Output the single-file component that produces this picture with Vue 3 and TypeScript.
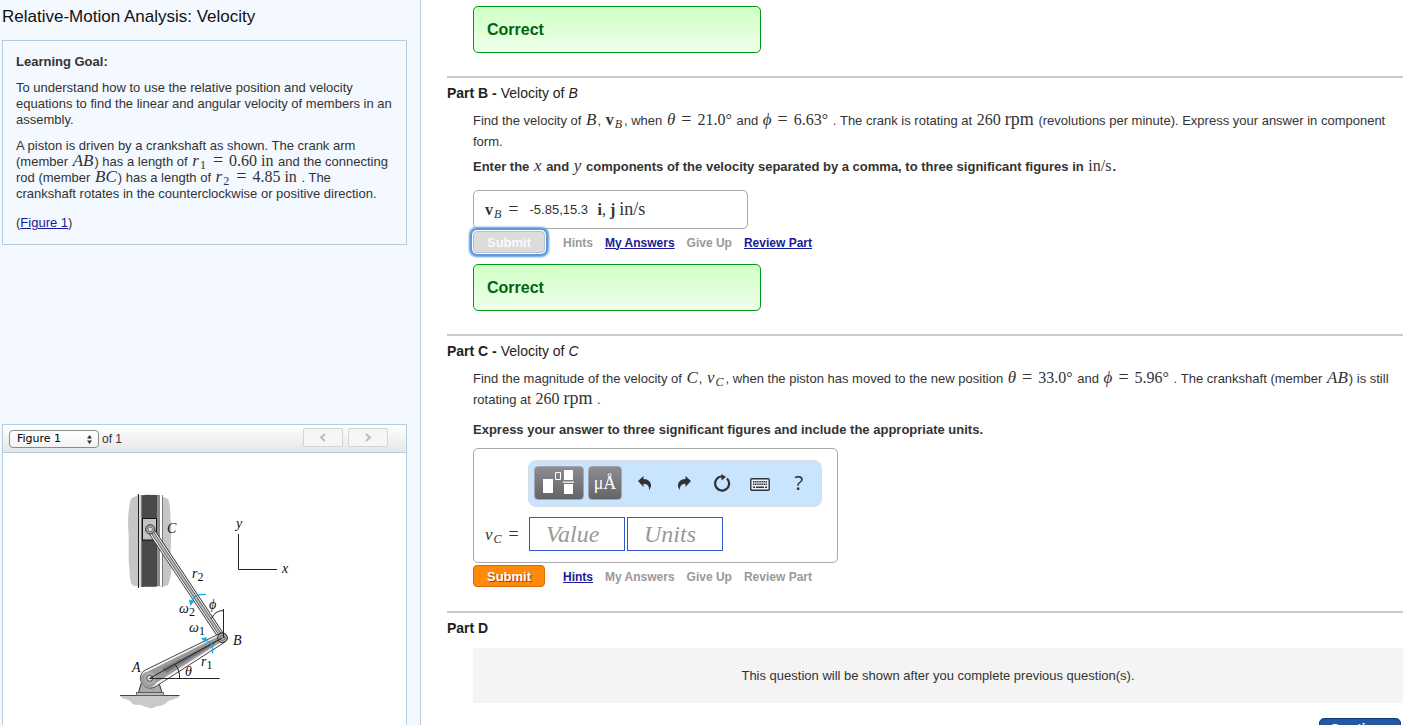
<script setup lang="ts">
import { ref } from 'vue'

const figure = ref('1')
const velocityB = ref('-5.85,15.3')
const value = ref('')
const units = ref('')
</script>

<template>
  <div class="page">
    <aside class="side">
      <h1>Relative-Motion Analysis: Velocity</h1>
      <section class="goal">
        <h2>Learning Goal:</h2>
        <p>To understand how to use the relative position and velocity equations to find the linear and angular velocity of members in an assembly.</p>
        <p>
          A piston is driven by a crankshaft as shown. The crank arm (member <span class="m"><i>AB</i></span>) has a length of
          <span class="m"><i>r</i><sub>1</sub><span class="eq">=</span>0.60 in</span> and the connecting rod (member
          <span class="m"><i>BC</i></span>) has a length of
          <span class="m"><i>r</i><sub>2</sub><span class="eq">=</span>4.85 in</span> . The crankshaft rotates in the counterclockwise or positive direction.
        </p>
        <p class="figlink">(<a href="#figure">Figure 1</a>)</p>
      </section>

      <section id="figure" class="figure">
        <header class="figbar">
          <label class="pick">
            <span class="selectwrap">
              <select v-model="figure" aria-label="Figure"><option value="1">Figure 1</option></select>
              <svg class="updown" width="5" height="9" viewBox="0 0 5 9"><path d="M0 3.6 2.5 0 5 3.6zM0 5.4h5L2.5 9z" fill="#333" /></svg>
            </span>
            <span>of 1</span>
          </label>
          <div class="nav">
            <button type="button" aria-label="Previous figure"><svg width="8" height="9" viewBox="0 0 8 9"><path d="M6 1 2 4.500 6 8" /></svg></button>
            <button type="button" aria-label="Next figure"><svg width="8" height="9" viewBox="0 0 8 9"><path d="M2 1 6 4.500 2 8" /></svg></button>
          </div>
        </header>
        <div class="canvas">
          <svg class="diagram" width="200" height="240" viewBox="0 0 200 240" role="img" aria-label="Piston driven by crankshaft">
            <!-- cylinder guide -->
            <path d="M28 15.500C25 16.500 22 17 20.500 20C18 32 17.500 40 18.500 52C19 65 18 78 19.500 90C20 98 20 103 23 105.500C28 107.500 34 106 39 107C46 106 53 107.500 58 105C61 98 62 90 61 80C60 68 62 56 61 44C60 36 61 28 58.500 20C56 16.500 50 17 46 15C40 14 34 16.500 28 15.500z" fill="#c6c6c6" />
            <rect x="28" y="15" width="4" height="92" fill="#d8d8d8" />
            <path d="M28.500 14v94M32 15v92" stroke="#222" stroke-width="1" />
            <path d="M32 15.500C37 14 42 15.500 47 15V106.500C42 107.500 37 106 32 107z" fill="#4a4a4a" />
            <rect x="47" y="15" width="3" height="91" fill="#8c8c8c" />
            <rect x="50" y="15" width="2" height="91" fill="#fff" />
            <path d="M52.500 15v92" stroke="#666" stroke-width=".8" />
            <rect x="32.500" y="38.500" width="14" height="21.500" fill="#c4c4c4" stroke="#111" />
            <!-- support -->
            <path d="M10 216H69.500C66 220 61 219 57 222C53 227 48 225 43 228C37 229 32 224 27 225C21 225 22 221 18 220C14 219 12 218 10 216z" fill="#c9c9c9" />
            <path d="M10 215.500H69.500" stroke="#444" />
            <path d="M33 197 28.500 212.500H52L47 197z" fill="#aaa" stroke="#333" />
            <rect x="26.500" y="212.500" width="27" height="3" fill="#bbb" stroke="#555" stroke-width=".8" />
            <!-- connecting rod -->
            <path d="M40.200 49.300 112.500 158" stroke="#333" stroke-width="7.400" stroke-linecap="round" />
            <path d="M40.200 49.300 112.500 158" stroke="#eee" stroke-width="5.800" stroke-linecap="round" />
            <path d="M40.200 49.300 112.500 158" stroke="#555" stroke-width="3.400" />
            <path d="M40.200 49.300 112.500 158" stroke="#bbb" stroke-width="1.900" />
            <circle cx="40.200" cy="49.300" r="4.600" fill="#aaa" stroke="#333" />
            <circle cx="40.200" cy="49.300" r="2.300" fill="#ddd" stroke="#555" stroke-width=".8" />
            <!-- crank -->
            <path d="M35.400 190 110.500 153.200A5 5 0 0 1 115 162L46.500 206A10 10 0 0 1 31 201.500A9 9 0 0 1 35.400 190z" fill="#f4f4f4" stroke="#333" stroke-width=".9" />
            <path d="M37.500 191.700 110 155.500 114 160 46 203A8 8 0 1 1 37.500 191.700z" fill="#9a9a9a" />
            <path d="M52 188.500 107 160 104 164.500 56 193z" fill="#767676" />
            <circle cx="40" cy="198.300" r="6.500" fill="#aaa" />
            <circle cx="39.700" cy="198.300" r="3" fill="#ddd" stroke="#444" stroke-width=".9" />
            <circle cx="112.500" cy="157.800" r="4.800" fill="#aaa" stroke="#222" />
            <circle cx="112.500" cy="157.800" r="2.500" fill="#bbb" stroke="#444" stroke-width=".7" />
            <!-- reference lines and angles -->
            <g fill="none" stroke="#222" stroke-width="1">
              <path d="M39.700 198.300 112.500 157.800M39.700 198.500H109.500M113.500 129V158" />
              <path d="M101.500 138.500Q105 130.500 113.500 130.500M65 184.500Q70 190 69.500 198.500" />
              <path d="M128.500 54V89.500H167" />
            </g>
            <g fill="none" stroke="#14a9e0" stroke-width="1.200">
              <path d="M96 114.500Q84 113 81.500 121.500M102.500 173.500Q104 162 95 160" />
            </g>
            <path d="M79 119.500 84.200 121.500 80.200 126zM91 158 97 157.500 95.500 162.500z" fill="#14a9e0" />
            <g class="lettering">
              <text x="57" y="53">C</text><text x="126" y="48">y</text><text x="172" y="93">x</text>
              <text x="82" y="98">r<tspan class="n" dy="3">2</tspan></text>
              <text x="69" y="133">ω<tspan class="n" dy="3">2</tspan></text>
              <text x="99" y="129">ϕ</text>
              <text x="79" y="152">ω<tspan class="n" dy="3">1</tspan></text>
              <text x="123" y="165">B</text><text x="22" y="192">A</text>
              <text x="91" y="186">r<tspan class="n" dy="3">1</tspan></text>
              <text x="75" y="196">θ</text>
            </g>
          </svg>
        </div>
      </section>
    </aside>

    <main class="main">
      <div class="body first"><div class="correct">Correct</div></div>

      <section class="part">
        <h2>Part B - <span>Velocity of <i>B</i></span></h2>
        <div class="body">
          <p class="text">
            Find the velocity of <span class="m"><i>B</i></span>, <span class="m"><b>v</b><sub><i>B</i></sub></span>, when
            <span class="m"><i>θ</i><span class="eq">=</span>21.0°</span> and
            <span class="m"><i>ϕ</i><span class="eq">=</span>6.63°</span> . The crank is rotating at
            <span class="m">260 <span class="unit">rpm</span></span> (revolutions per minute). Express your answer in component form.
          </p>
          <p class="ask">
            Enter the <span class="m"><i>x</i></span> and <span class="m"><i>y</i></span> components of the velocity separated by a comma, to three significant figures in <span class="m">in/s</span>.
          </p>
          <div class="answer short">
            <label for="vb" class="m"><b>v</b><sub><i>B</i></sub><span class="eq">=</span></label>
            <input id="vb" v-model="velocityB" class="plain" type="text" readonly />
            <span class="m"><b>i</b>, <b>j</b> <span class="unit">in/s</span></span>
          </div>
          <div class="actions">
            <button type="button" class="submit spent">Submit</button>
            <span class="off">Hints</span><a href="#answers">My Answers</a><span class="off">Give Up</span><a href="#review">Review Part</a>
          </div>
          <div class="correct">Correct</div>
        </div>
      </section>

      <section class="part">
        <h2>Part C - <span>Velocity of <i>C</i></span></h2>
        <div class="body">
          <p class="text">
            Find the magnitude of the velocity of <span class="m"><i>C</i></span>, <span class="m"><i>v</i><sub><i>C</i></sub></span>, when the piston has moved to the new position
            <span class="m"><i>θ</i><span class="eq">=</span>33.0°</span> and
            <span class="m"><i>ϕ</i><span class="eq">=</span>5.96°</span> . The crankshaft (member
            <span class="m"><i>AB</i></span>) is still rotating at <span class="m">260 <span class="unit">rpm</span></span> .
          </p>
          <p class="ask late">Express your answer to three significant figures and include the appropriate units.</p>
          <div class="answer long">
            <div class="toolbar">
              <button type="button" class="tool wide" aria-label="Templates">
                <svg width="32" height="26" viewBox="0 0 32 26"><path d="M1 10h10v14H1zM22 1h9v10h-9zM22 15h9v10h-9zM21 12.500h11v1.200H21z" fill="#fff" /><path d="M13.500 3.500h5v7h-5z" fill="none" stroke="#fff" /></svg>
              </button>
              <button type="button" class="tool" aria-label="Symbols">μÅ</button>
              <button type="button" class="icon" aria-label="Undo"><svg width="16" height="16" viewBox="0 0 16 16"><path d="M1 6 6.500 1V4C11.500 4.200 14.500 7 14 11.500L12 15.500C12.500 11.500 11 9 6.500 8.800V12z" fill="#333" /></svg></button>
              <button type="button" class="icon" aria-label="Redo"><svg width="16" height="16" viewBox="0 0 16 16"><path d="M15 6 9.500 1V4C4.500 4.200 1.500 7 2 11.500L4 15.500C3.500 11.500 5 9 9.500 8.800V12z" fill="#333" /></svg></button>
              <button type="button" class="icon" aria-label="Reset"><svg width="18" height="18" viewBox="0 0 18 18"><path d="M14 4.500A7 7 0 1 1 9 2.500" fill="none" stroke="#333" stroke-width="2.200" /><path d="M8.500 0 13 3 8.500 6.500z" fill="#333" /></svg></button>
              <button type="button" class="icon low" aria-label="Keyboard"><svg width="20" height="13" viewBox="0 0 20 13"><rect x=".8" y=".8" width="18.400" height="11.400" rx="1" fill="#eaf4ff" stroke="#333" stroke-width="1.400" /><path d="M3 3.700h14M3 6.200h14" stroke="#333" stroke-width="1.500" stroke-dasharray="1.500 .6" /><path d="M3 9.200h2M6 9.200h8M15 9.200h2" stroke="#333" stroke-width="1.500" /></svg></button>
              <button type="button" class="icon help" aria-label="Help">?</button>
            </div>
            <div class="entry">
              <label for="vc" class="m"><i>v</i><sub><i>C</i></sub><span class="eq">=</span></label>
              <input id="vc" v-model="value" type="text" placeholder="Value" />
              <input v-model="units" type="text" placeholder="Units" aria-label="Units" />
            </div>
          </div>
          <div class="actions">
            <button type="button" class="submit">Submit</button>
            <a href="#hints">Hints</a><span class="off">My Answers</span><span class="off">Give Up</span><span class="off">Review Part</span>
          </div>
        </div>
      </section>

      <section class="part">
        <h2>Part D</h2>
        <div class="body"><p class="locked">This question will be shown after you complete previous question(s).</p></div>
      </section>
      <div class="foot"><button type="button" class="continue">Continue</button></div>
    </main>
  </div>
</template>

<style>
body { margin: 0; background: #fff; }
</style>

<style scoped>
* { box-sizing: border-box; }
.page {
  display: flex;
  height: 100vh;
  overflow: hidden;
  font: 13px/16px "Liberation Sans", Arial, sans-serif;
  color: #333;
}
h1, h2, p { margin: 0; }
button, input, select { margin: 0; font: inherit; }
a { color: #1a1a99; }

.m { margin: 0 1px; font-family: "Liberation Serif", "Times New Roman", serif; font-size: 16px; line-height: 0; white-space: nowrap; }
.m i { font-size: 17px; }
.m sub, .m sub i { font-size: 12px; line-height: 0; }
.m sub { margin: 0 1px; vertical-align: -3px; }
.eq { margin: 0 6px; font-size: 18px; }
.unit { font-size: 18px; }

.side {
  flex: 0 0 421px;
  display: flex;
  flex-direction: column;
  padding: 7px 13px 0 2px;
  background: #f4f8ff;
  border-right: 1px solid #b4cce0;
}
h1 { font-size: 17px; line-height: 20px; font-weight: normal; color: #111; }
.goal { margin-top: 13px; padding: 13px; border: 1px solid #b4cce0; }
.goal h2 { font-size: 13px; line-height: 16px; }
.goal p { margin-top: 10px; }
.goal .figlink { margin-top: 13px; }

.figure {
  flex: 1 0 auto;
  display: flex;
  flex-direction: column;
  margin-top: 179px;
  border: 1px solid #b4cce0;
  border-bottom: 0;
  background: #fff;
}
.figbar {
  display: flex;
  justify-content: space-between;
  align-items: center;
  height: 28px;
  padding: 0 18px 0 6px;
  background: linear-gradient(#fff, #e6e6e6);
  border-bottom: 1px solid #b4cce0;
}
.pick { display: flex; align-items: center; gap: 3px; font-size: 12px; }
.selectwrap { position: relative; display: flex; }
.updown { position: absolute; right: 7px; top: 5px; pointer-events: none; }
select {
  appearance: none;
  width: 90px;
  height: 18px;
  padding: 0 0 0 7px;
  font: 11px/16px "DejaVu Sans", sans-serif;
  color: #000;
  background: linear-gradient(#fff, #f3f3f3);
  border: 1px solid #8c8c8c;
  border-radius: 4px;
}
.nav { display: flex; gap: 5px; padding-bottom: 2px; }
.nav button {
  display: grid;
  place-items: center;
  width: 40px;
  height: 19px;
  padding: 0;
  background: #f6f6f6;
  border: 1px solid #d4d4d4;
  border-radius: 2px;
}
.nav path { fill: none; stroke: #bcbcbc; stroke-width: 2; }
.canvas { padding: 27px 0 0 107px; }
.diagram { display: block; }
.lettering { font: italic 14px "Liberation Serif", serif; fill: #111; }
.n { font-style: normal; font-size: 12px; }

.main { flex: 1; min-width: 0; padding: 6px 20px 0 26px; }
.body { padding-left: 26px; }
.correct {
  width: 288px;
  padding: 13px;
  font-size: 16px;
  line-height: 19px;
  font-weight: bold;
  color: #006411;
  background: linear-gradient(#cfffc4, #efffec);
  border: 1px solid #009c12;
  border-radius: 5px;
}
.part { margin-top: 23px; padding-top: 7px; border-top: 2px solid #ccc; }
.part h2 { font-size: 14px; line-height: 16px; color: #222; }
.part h2 span { font-weight: normal; }
.text { margin-top: 9px; line-height: 21px; }
.ask { margin-top: 6px; font-weight: bold; line-height: 18px; }
.ask .m { font-weight: normal; }
.late { margin-top: 11px; }
.answer { border: 1px solid #aaa; border-radius: 5px; }
.short {
  display: flex;
  align-items: center;
  width: 275px;
  height: 39px;
  margin-top: 14px;
  padding-left: 10px;
}
.short .m, .entry .m { line-height: 20px; }
.plain { width: 67px; height: 20px; margin-left: 4px; padding: 0; border: 0; color: #333; background: none; outline: 0; }
.actions {
  display: flex;
  align-items: center;
  gap: 12px;
  margin: 2px 0 10px;
  padding-bottom: 1px;
  font-size: 12px;
  font-weight: bold;
}
.actions a, .off { padding-top: 1px; }
.off { color: #999; }
.submit {
  width: 72px;
  height: 22px;
  margin-right: 6px;
  padding: 1px 0 0;
  font-size: 13px;
  font-weight: bold;
  color: #fff;
  text-shadow: 1px 1px 1px #903c00;
  background: #ff8a0a;
  border: 1px solid #d86c00;
  border-radius: 4px;
}
.spent {
  color: #fafafa;
  text-shadow: none;
  background: #dcdcdc;
  border-color: #c0c0c0;
  box-shadow: 0 0 0 1px #fff, 0 0 2px 4px #5b98e0;
}
.long { width: 365px; margin-top: 9px; padding: 11px 15px 11px 10px; }
.toolbar {
  display: flex;
  align-items: center;
  height: 47px;
  margin-left: 44px;
  padding: 0 3px 2px 5px;
  background: #c9e4ff;
  border: 1px solid #d8dde2;
  border-radius: 8px;
}
.tool {
  display: grid;
  place-items: center;
  width: 34px;
  height: 34px;
  margin-right: 4px;
  padding: 0;
  font: 18px/30px "Liberation Serif", serif;
  color: #fff;
  background: linear-gradient(#8e8c94, #646466);
  border: 1px solid #a5a5ab;
  border-radius: 4px;
}
.wide { width: 50px; padding: 0 3px 2px 0; }
.icon { display: grid; place-items: center; flex: 1; height: 34px; padding: 0; background: none; border: 0; }
.low { padding-top: 4px; }
.help { font: 20px/20px "Noto Sans", sans-serif; color: #333; }
.entry { display: flex; align-items: center; gap: 2px; margin-top: 10px; }
.entry .m { width: 41px; }
.entry input {
  width: 96px;
  height: 34px;
  padding: 0 0 0 16px;
  font: italic 24px "Liberation Serif", serif;
  border: 1px solid #2f58c8;
  background: #fff;
}
.entry input::placeholder { color: #999; opacity: 1; }
.locked { margin-top: 12px; padding: 20px 0 19px; text-align: center; background: #f4f4f4; }
.foot { display: flex; justify-content: flex-end; padding: 15px 2px 0 0; }
.continue {
  width: 82px;
  height: 22px;
  padding: 0;
  font-size: 14px;
  font-weight: bold;
  color: #fff;
  background: #2659a5;
  border: 1px solid #123c78;
  border-radius: 5px;
}
</style>
